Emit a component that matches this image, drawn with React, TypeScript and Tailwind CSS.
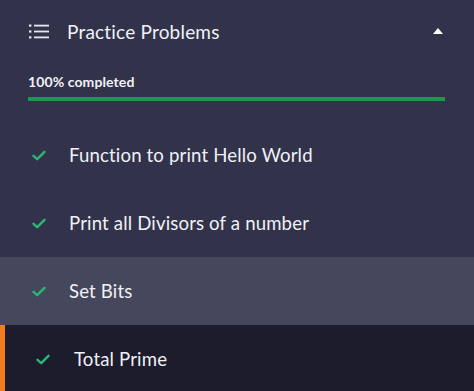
import React from "react";

const Check = () => (
  <svg width="14" height="11" viewBox="0 0 14 11" fill="none">
    <path d="M1.5 5.8 L5.2 9.2 L12.5 1.8" stroke="#2bb673" strokeWidth="2.4" strokeLinecap="round" strokeLinejoin="round" />
  </svg>
);

const ListIcon = () => (
  <svg width="20" height="15" viewBox="0 0 20 15" fill="#e5e7f0">
    <rect x="0" y="0.5" width="2.4" height="2.2" />
    <rect x="0" y="6.4" width="2.4" height="2.2" />
    <rect x="0" y="12.3" width="2.4" height="2.2" />
    <rect x="5" y="0.7" width="15" height="1.8" />
    <rect x="5" y="6.6" width="15" height="1.8" />
    <rect x="5" y="12.5" width="15" height="1.8" />
  </svg>
);

type Item = { title: string; state?: "hover" | "active" };

const items: Item[] = [
  { title: "Function to print Hello World" },
  { title: "Print all Divisors of a number" },
  { title: "Set Bits", state: "hover" },
  { title: "Total Prime", state: "active" },
];

export default function App() {
  return (
    <div
      className="w-[474px] h-[391px] overflow-hidden bg-[#32334a] text-[#f0f1f6]"
      style={{ fontFamily: "Lato, 'Open Sans', sans-serif" }}
    >
      <div className="h-[62px] flex items-center pl-[29px] pr-[31px]">
        <ListIcon />
        <span className="ml-[18px] text-[19px] leading-none tracking-[0.2px]">Practice Problems</span>
        <div className="ml-auto w-0 h-0 border-l-[5.5px] border-r-[5.5px] border-b-[6px] border-l-transparent border-r-transparent border-b-white" />
      </div>
      <div className="pl-[28px] pr-[29px] pt-[13px]">
        <div className="text-[14px] font-bold leading-none tracking-[0.1px]">100% completed</div>
        <div className="mt-[8px] h-[4px] bg-[#189a4c]" />
      </div>
      <div className="mt-[20px]">
        {items.map((it) => {
          const bg =
            it.state === "hover" ? "bg-[#45475c]" : it.state === "active" ? "bg-[#1c1c2d]" : "";
          const active = it.state === "active";
          return (
            <div key={it.title} className={`h-[68px] flex items-center ${bg}`}>
              {active ? <div className="w-[5px] self-stretch bg-[#f47c20]" /> : null}
              <div className={`flex items-center ${active ? "pl-[31px]" : "pl-[32px]"}`}>
                <Check />
                <span className={`${active ? "ml-[24px]" : "ml-[23px]"} text-[18.6px] leading-none tracking-[0.15px]`}>
                  {it.title}
                </span>
              </div>
            </div>
          );
        })}
      </div>
    </div>
  );
}
